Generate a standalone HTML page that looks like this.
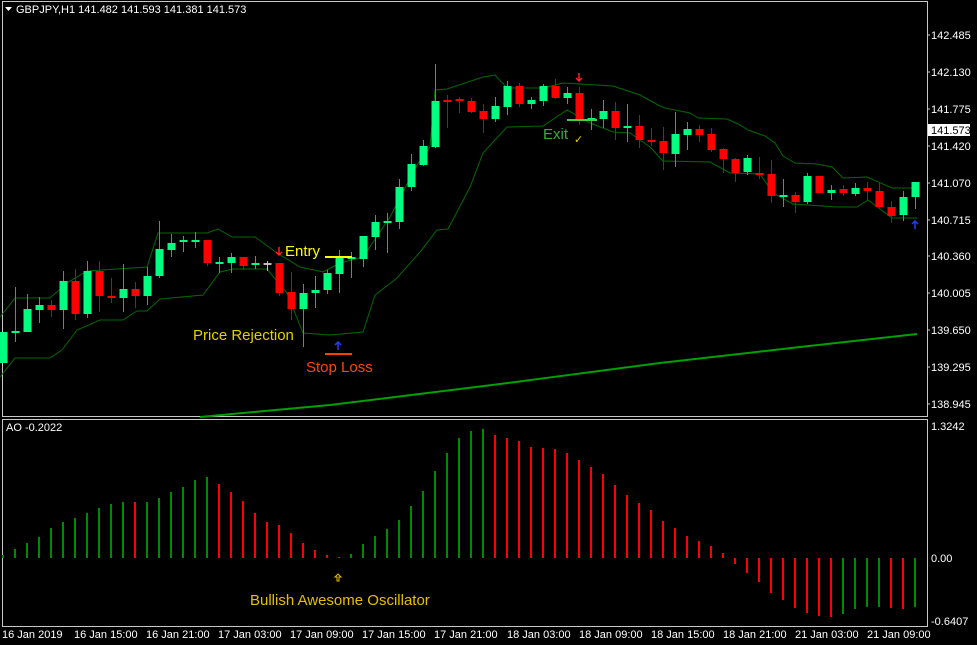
<!DOCTYPE html>
<html><head><meta charset="utf-8"><style>
html,body{margin:0;padding:0;background:#000;}
body{width:977px;height:645px;overflow:hidden;position:relative;font-family:"Liberation Sans",sans-serif;}
svg{position:absolute;left:0;top:0;}
</style></head><body>
<svg id="s" width="977" height="645" xmlns="http://www.w3.org/2000/svg" font-family="Liberation Sans, sans-serif">
<rect width="977" height="645" fill="#000"/>
<g stroke="#c8c8c8" fill="none" stroke-width="1">
<rect x="2.5" y="1.5" width="925" height="415"/>
<rect x="2.5" y="419.5" width="925" height="207"/>
</g>
<g id="env" fill="none" stroke="#006a00" stroke-width="1">
<polyline points="0,317 15,298 50,298 67,283 87,271 147,267 158,233 207,233 218,229 232,237 255,237 277,253 300,267 323,272 340,263 363,257 390,217 417,165 430,147 435,90 447,89 483,77 495,75 507,88 543,88 563,83 613,86 640,95 660,106 665,108 690,113 698,118 727,119 740,125 748,130 765,136 775,143 783,156 795,163 817,164 832,167 843,178 867,177 892,188 917,188"/>
<polyline points="0,377 15,358 50,358 62,350 77,330 100,320 123,320 137,311 147,311 160,299 203,295 220,272 233,269 267,269 287,293 303,333 330,335 363,332 375,295 397,278 420,252 437,230 448,229 470,187 483,153 507,127 543,126 567,110 590,123 613,132 630,133 650,147 663,161 710,162 730,173 760,174 773,193 793,204 837,207 857,207 868,200 892,218 917,218"/>
</g>
<polyline fill="none" stroke="#00a000" stroke-width="2" points="200,417 330,405 500,384 660,363 800,347 917,334"/>
<g id="c"></g>
<g id="ao"></g>
<line x1="325" y1="257" x2="352" y2="257" stroke="#ffff00" stroke-width="2"/>
<line x1="325" y1="354" x2="352" y2="354" stroke="#ff4000" stroke-width="2"/>
<line x1="567" y1="120" x2="597" y2="120" stroke="#40d040" stroke-width="2"/>
<text x="285" y="256" fill="#ffff00" font-size="15">Entry</text>
<text x="193" y="340" fill="#e6d000" font-size="15">Price Rejection</text>
<text x="306" y="372" fill="#ff4500" font-size="15">Stop Loss</text>
<text x="543" y="139" fill="#30b030" font-size="15">Exit</text>
<text x="574" y="143" fill="#e6d000" font-size="11">✓</text>
<path d="M279 247v8M276 252l3 3 3-3" stroke="#ff2020" stroke-width="1.5" fill="none"/>
<path d="M579 73v8M576 78l3 3 3-3" stroke="#ff2020" stroke-width="1.5" fill="none"/>
<path d="M338 350v-8M335 345l3-3 3 3" stroke="#2040ff" stroke-width="1.5" fill="none"/>
<path d="M915 229v-8M912 224l3-3 3 3" stroke="#2040ff" stroke-width="1.5" fill="none"/>
<path d="M338 574l-3 3h2v4h2v-4h2z" stroke="#e6c000" stroke-width="1" fill="none"/>
<text x="250" y="605" fill="#e6c000" font-size="15">Bullish Awesome Oscillator</text>
<path d="M5 7h7l-3.5 4z" fill="#fff"/>
<text x="16" y="13" fill="#fff" font-size="11">GBPJPY,H1  141.482 141.593 141.381 141.573</text>
<text x="6" y="431" fill="#fff" font-size="11">AO -0.2022</text>
<g fill="#fff" font-size="11">
<text x="931" y="39">142.485</text><text x="931" y="76">142.130</text><text x="931" y="113">141.775</text>
<text x="931" y="150">141.420</text><text x="931" y="187">141.070</text><text x="931" y="224">140.715</text>
<text x="931" y="260">140.360</text><text x="931" y="297">140.005</text><text x="931" y="334">139.650</text>
<text x="931" y="371">139.295</text><text x="931" y="408">138.945</text>
<text x="931" y="430">1.3242</text><text x="931" y="562">0.00</text><text x="931" y="625">-0.6407</text>
</g>
<g stroke="#c8c8c8"><line x1="927" y1="35" x2="930" y2="35"/><line x1="927" y1="72" x2="930" y2="72"/><line x1="927" y1="109" x2="930" y2="109"/><line x1="927" y1="146" x2="930" y2="146"/><line x1="927" y1="183" x2="930" y2="183"/><line x1="927" y1="220" x2="930" y2="220"/><line x1="927" y1="256" x2="930" y2="256"/><line x1="927" y1="293" x2="930" y2="293"/><line x1="927" y1="330" x2="930" y2="330"/><line x1="927" y1="367" x2="930" y2="367"/><line x1="927" y1="404" x2="930" y2="404"/></g>
<rect x="928" y="124" width="42" height="12" fill="#fff"/>
<text x="931" y="134" fill="#000" font-size="11">141.573</text>
<g fill="#fff" font-size="11">
<text x="2" y="638">16 Jan 2019</text><text x="74" y="638">16 Jan 15:00</text><text x="146" y="638">16 Jan 21:00</text>
<text x="218" y="638">17 Jan 03:00</text><text x="290" y="638">17 Jan 09:00</text><text x="362" y="638">17 Jan 15:00</text>
<text x="434" y="638">17 Jan 21:00</text><text x="507" y="638">18 Jan 03:00</text><text x="579" y="638">18 Jan 09:00</text>
<text x="651" y="638">18 Jan 15:00</text><text x="723" y="638">18 Jan 21:00</text><text x="795" y="638">21 Jan 03:00</text>
<text x="867" y="638">21 Jan 09:00</text>
</g>
</svg>
<script>
var C=[
['g',332,363,332,363],['g',287,342,331,333],['g',294,332,309,332],['g',297,323,305,310],['r',300,317,305,310],
['g',271,329,281,310],['r',269,320,281,314],['g',261,318,271,314],['r',261,312,271,296],['r',278,303,296,298],
['g',264,312,289,298],['r',282,308,289,296],['g',267,305,276,296],['g',221,278,249,276],['g',234,257,243,250],
['g',236,252,240,242],['g',232,248,240,241],['r',240,266,240,263],['g',257,273,262,263],['g',253,273,257,263],
['r',257,270,257,266],['g',256,269,263,265],['w',261,271,263,264],['r',263,296,263,293],['r',272,320,292,309],
['g',284,347,293,309],['g',276,308,290,293],['g',270,294,273,290],['g',250,293,257,274],['g',252,278,257,259],
['g',236,267,236,259],['g',215,250,222,237],['g',213,253,221,223],['g',179,229,187,222],['g',154,191,164,187],
['g',140,166,146,165],['g',64,148,101,147],['r',95,128,100,101],['r',97,113,99,101],['r',98,113,101,112],
['r',104,133,111,119],['g',97,122,106,119],['g',81,115,86,107],['r',83,107,86,104],['g',97,109,100,104],
['g',84,106,86,101],['r',79,99,86,98],['g',87,104,93,98],['r',87,125,93,119],['g',109,130,118,120],
['g',100,128,111,119],['r',102,140,111,128],['g',104,142,126,128],['r',115,148,126,140],['r',128,146,140,142],
['r',127,170,141,153],['g',112,167,134,154],['g',122,150,129,135],['r',125,142,129,135],['r',128,152,134,150],
['r',148,173,149,159],['r',158,182,159,173],['g',155,175,158,172],['r',157,179,173,175],['r',160,203,174,196],
['g',179,207,195,197],['r',192,213,195,202],['g',173,204,176,202],['r',176,193,176,193],['g',185,200,190,193],
['r',185,196,189,193],['g',183,196,188,194],['r',182,200,188,191],['r',183,209,191,207],['r',201,223,207,216],
['g',191,221,197,215],['g',182,209,182,197]];
var h='';
C.forEach(function(c,i){var x=3+12*i;var col=c[0]=='g'?'#00ff80':c[0]=='r'?'#ff0000':'#c0c0c0';
var wc=c[0]=='g'?'#00c060':c[0]=='r'?'#d00000':'#c0c0c0';
h+='<line x1="'+(x+.5)+'" y1="'+c[1]+'" x2="'+(x+.5)+'" y2="'+c[2]+'" stroke="'+wc+'"/>';
var bh=Math.max(2,c[4]-c[3]);h+='<rect x="'+(x-3.5)+'" y="'+c[3]+'" width="8" height="'+bh+'" fill="'+col+'"/>';});
document.getElementById('c').innerHTML=h;
var A=[555,549,543,537,528,522,518,513,508,504,502,502,502,498,492,487,480,477,484,492,501,513,522,525,533,543,550,555,557,554,544,536,529,520,506,491,471,453,438,431,429,
435,438,441,447,448,449,453,460,467,474,485,495,503,510,521,528,536,541,546,553,564,573,582,593,600,608,613,616,617,614,609,607,607,608,609,607];
var R={};[11,18,19,20,21,22,23,24,25,26,27,28,74,75].forEach(function(k){R[k]=1});
for(var k=41;k<=69;k++)R[k]=1;
var g='';A.forEach(function(v,i){var x=2+12*i;var col=R[i]?'#ff0000':'#008a00';
var y1=Math.min(558,v),hh=Math.max(1,Math.abs(v-558));
g+='<rect x="'+x+'" y="'+y1+'" width="2" height="'+hh+'" fill="'+col+'"/>';});
document.getElementById('ao').innerHTML=g;
</script>
</body></html>
